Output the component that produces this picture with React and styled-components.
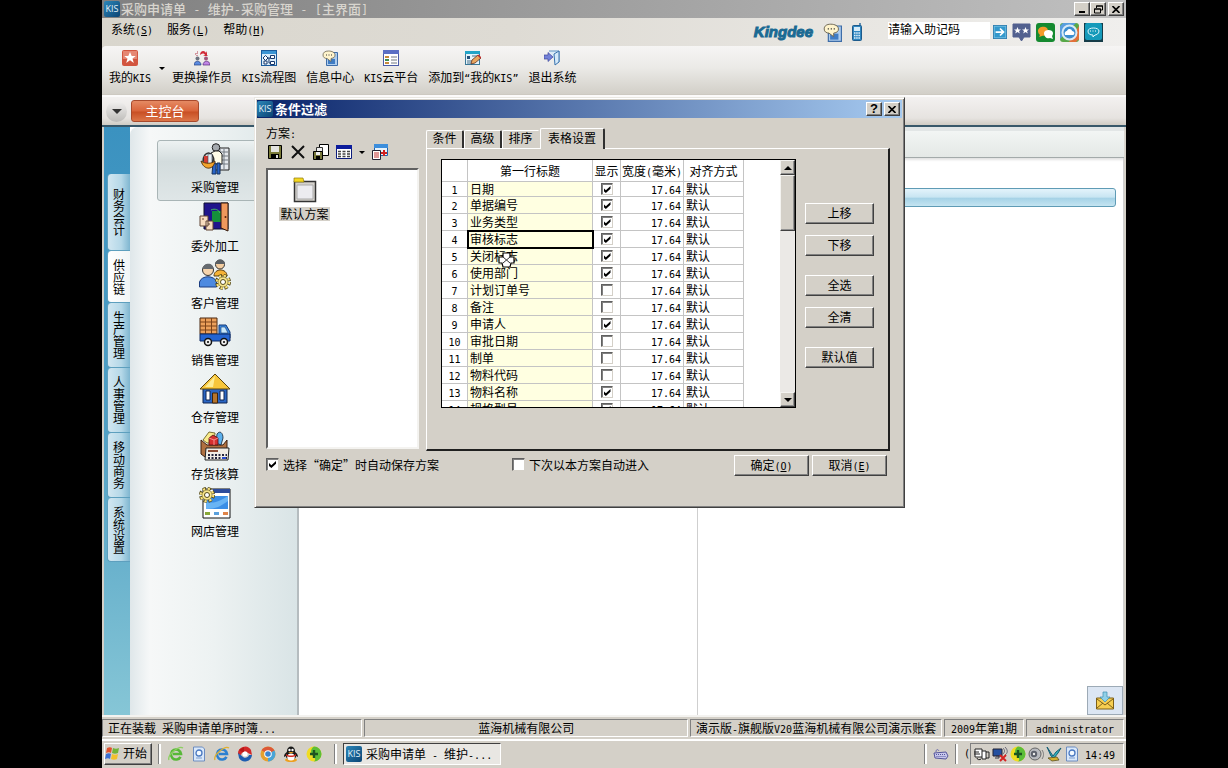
import React from 'react';
import styled, { createGlobalStyle } from 'styled-components';

const GlobalStyle = createGlobalStyle`
  * { box-sizing: border-box; }
  body {
    margin: 0;
    background: #000;
    color: #000;
    font: 12px/14px "Noto Sans CJK SC", sans-serif;
  }
  button, input { font: inherit; color: inherit; margin: 0; padding: 0; }
  button { border: 0; background: none; white-space: nowrap; }
  svg { display: block; flex: none; }
`;

/* half-width characters next to the 12px ideographs */
const Half = styled.span`
  font-family: "DejaVu Sans Mono", monospace;
  font-size: ${p => (p.$large ? '12px' : '10px')};
  line-height: 1;
  white-space: pre;
`;

const Screen = styled.div`
  min-height: 100vh;
  padding: 0 102px;
  background: #000;
`;

const Desktop = styled.div`
  position: relative;
  display: flex;
  flex-direction: column;
  min-height: 100vh;
  background: #d4d0c8;
`;

const TitleBar = styled.header`
  display: flex;
  align-items: center;
  gap: 1px;
  height: 18px;
  padding: 0 2px;
  color: #d8d5ce;
  font-size: 13px;
  background: linear-gradient(90deg, #808080, #c0c0c0);
`;

const TitleText = styled.h1`
  flex: 1;
  margin: 0;
  font-size: 13px;
  line-height: 16px;
  font-weight: 500;
  white-space: nowrap;
`;

const KisLogo = styled.span`
  display: inline-flex;
  align-items: center;
  justify-content: center;
  flex: none;
  width: 16px;
  height: 16px;
  border-radius: 2px;
  color: #e4f2fa;
  font: 9px/16px "Open Sans", sans-serif;
  background: linear-gradient(135deg, #2b86b8, #0b4474);
`;

const CaptionButtons = styled.div`
  display: flex;
  button:last-child { margin-left: 2px; }
`;

const CaptionButton = styled.button`
  display: flex;
  align-items: center;
  justify-content: center;
  width: 16px;
  height: 14px;
  color: #000;
  background: #d4d0c8;
  border: 1px solid;
  border-color: #fff #404040 #404040 #fff;
  box-shadow: inset -1px -1px #808080;
  font: bold 13px/12px "Liberation Sans", sans-serif;
`;

const MenuBar = styled.nav`
  display: flex;
  align-items: center;
  height: 28px;
  padding: 0 23px 0 9px;
  background: linear-gradient(90deg, #d9d6cd, #dedbd4 40%, #f0efed);
`;

const Menus = styled.div`
  display: flex;
  flex: 1;
  gap: 14px;
  padding-bottom: 6px;
`;

const Brand = styled.strong`
  margin-right: 10px;
  color: #1b6a93;
  font: italic 900 15px/18px "Liberation Sans", sans-serif;
  -webkit-text-stroke: 1px #1b6a93;
`;

const Mnemonic = styled.input`
  width: 102px;
  height: 17px;
  margin: 0 3px 3px 26px;
  padding-bottom: 4px;
  border: 0;
  background: #fff;
  outline: 0;
`;

const LinkIcons = styled.div`
  display: flex;
  align-items: center;
  gap: ${p => (p.$wide ? '10px' : '5px')};
`;

const IconButton = styled.button`
  display: flex;
  align-items: center;
`;

const ToolBar = styled.div`
  display: flex;
  gap: 10px;
  height: 49px;
  padding: 4px 7px 0;
  border-top-left-radius: 4px;
  background: linear-gradient(#f6f5f4, #ebeae7 45%, #d2cfc8);
  border-bottom: 1px solid #cdc9c1;
`;

const Tool = styled.button`
  display: flex;
  flex-direction: column;
  align-items: center;
  gap: 4px;
`;

const ToolArrow = styled.button`
  width: 1px;
  display: flex;
  justify-content: center;
  padding-top: 17px;
`;

const Triangle = styled.span`
  display: block;
  flex: none;
  width: 0;
  height: 0;
  border: ${p => p.$size}px solid transparent;
  border-bottom-width: 0;
  border-top-color: ${p => p.$color || '#000'};
  transform: ${p => (p.$up ? 'rotate(180deg)' : 'none')};
`;

const PageStrip = styled.div`
  display: flex;
  align-items: flex-end;
  gap: 4px;
  height: 32px;
  padding: 0 4px 3px;
  border-top: 2px solid #fbfafa;
  border-bottom: 2px solid #38586a;
  background: linear-gradient(#f3f1f0, #e6e3e0 75%, #d0ccc4);
`;

const RoundButton = styled.button`
  display: flex;
  align-items: center;
  justify-content: center;
  width: 21px;
  height: 21px;
  border-radius: 50%;
  background: linear-gradient(#f2f1f0, #bdbbb8);
`;

const PageTab = styled.button`
  width: 68px;
  height: 22px;
  border: 1px solid #a84a2c;
  border-radius: 3px;
  color: #fff;
  font-size: 13px;
  line-height: 20px;
  background: linear-gradient(#e58a63, #d9643a 50%, #c84f24 55%, #dc7548);
`;

const Main = styled.main`
  display: flex;
  flex: 1;
  margin: 0 2px;
  background: #fff;
`;

const Rail = styled.nav`
  width: 26px;
  padding: 47px 0 0 3px;
  background: linear-gradient(#3b92c0, #4f9fc4 50%, #86c6d6);
`;

const RailTab = styled.button`
  display: flex;
  align-items: center;
  justify-content: center;
  width: 23px;
  height: ${p => p.$height}px;
  border: 1px solid #5d9fbe;
  border-width: 0 0 1px 1px;
  border-radius: 4px 0 0 4px;
  line-height: 12px;
  background: ${p => (p.$active ? 'linear-gradient(90deg, #fff, #f1f5f6)' : 'linear-gradient(90deg, #d2e7f1, #b5d8e8 60%, #7fb6d0)')};
  span { width: 12px; white-space: normal; }
`;

const SidePanel = styled.aside`
  width: 169px;
  padding: 13px 0 0 27px;
  border-right: 2px solid #b5bcbf;
  border-top-left-radius: 8px;
  background: linear-gradient(90deg, #dfe7ea, #f6f8f8 12%, #edf2f2 50%, #d9e4e6);
`;

const SideItem = styled.button`
  display: flex;
  flex-direction: column;
  align-items: center;
  gap: 5px;
  width: 116px;
  height: ${p => (p.$active ? '61px' : '57px')};
  padding-top: ${p => (p.$active ? '2px' : '0')};
  border: 1px solid ${p => (p.$active ? '#a9b5b6' : 'transparent')};
  border-radius: 3px;
  background: ${p => (p.$active ? 'linear-gradient(#edf2f2, #d3dcdd 35%, #dfe6e7)' : 'none')};
`;

const Workspace = styled.div`
  display: flex;
  flex-direction: column;
  flex: 1;
`;

const WorkHeader = styled.div`
  height: 31px;
  border-top: 4px solid #e2e6e6;
  border-bottom: 1px solid #a3aaaa;
  background: linear-gradient(#f2f5f4, #e4e8e6);
  box-shadow: 0 2px 2px #e3e3e3;
`;

const Panes = styled.div`
  display: flex;
  flex: 1;
`;

const Pane = styled.section`
  display: flex;
  flex-direction: column;
  justify-content: space-between;
  align-items: flex-end;
  width: ${p => p.$width || 'auto'};
  flex: ${p => (p.$width ? 'none' : '1')};
  border-right: 1px solid #cfcfcf;
`;

const PaneHeading = styled.div`
  width: calc(100% - 16px);
  height: 19px;
  margin: 30px 7px 0 0;
  border: 1px solid #5f9bb5;
  border-radius: 3px;
  background: linear-gradient(#e3f3fb, #c8e5f2 48%, #a5d2e6 54%, #c4e4f1);
`;

const MailButton = styled.button`
  display: flex;
  align-items: center;
  justify-content: center;
  width: 36px;
  height: 29px;
  border: 1px solid #9daab6;
  background: #dce6f3;
`;

const StatusBar = styled.footer`
  display: flex;
  gap: 2px;
  height: 24px;
  padding: 2px 2px 2px 0;
  border-top: 2px solid #f4f3f0;
`;

const StatusCell = styled.div`
  flex: ${p => p.$flex || 'none'};
  width: ${p => p.$width || 'auto'};
  overflow: hidden;
  padding: 0 5px;
  text-align: ${p => p.$align || 'center'};
  line-height: 16px;
  white-space: nowrap;
  border: 1px solid;
  border-color: #808080 #fff #fff #808080;
`;

const TaskBar = styled.footer`
  display: flex;
  align-items: center;
  height: 29px;
  padding: 1px 2px 3px;
  border-top: 2px solid #fff;
`;

const StartButton = styled.button`
  display: flex;
  align-items: center;
  gap: 2px;
  width: 48px;
  height: 22px;
  padding-bottom: 2px;
  border: 1px solid;
  border-color: #fff #404040 #404040 #fff;
  box-shadow: inset -1px -1px #808080;
  line-height: 16px;
`;

const Grip = styled.span`
  width: 3px;
  height: 20px;
  margin: 0 6px;
  border-left: 1px solid #808080;
  border-right: 2px solid #fff;
`;

const QuickLaunch = styled.div`
  display: flex;
  gap: 7px;
  margin: 0 6px 0 0;
  padding-left: 1px;
`;

const TaskButton = styled.button`
  display: flex;
  align-items: center;
  gap: 4px;
  width: 158px;
  height: 22px;
  padding-left: 2px;
  border: 1px solid;
  border-color: #404040 #fff #fff #404040;
  background: #e9e7e3;
`;

const Spacer = styled.div`
  flex: 1;
`;

const Tray = styled.div`
  display: flex;
  align-items: center;
  gap: 2px;
  width: 154px;
  height: 22px;
  padding-left: 3px;
  border: 1px solid;
  border-color: #808080 #fff #fff #808080;
  time { margin-left: 3px; }
`;

const Dialog = styled.section`
  position: absolute;
  left: 152px;
  top: 97px;
  width: 651px;
  padding: 2px 2px 31px;
  background: #d4d0c8;
  border: 1px solid;
  border-color: #e9e7e2 #404040 #404040 #e9e7e2;
  box-shadow: inset 1px 1px #fff, inset -1px -1px #808080;
`;

const DialogTitle = styled.header`
  display: flex;
  align-items: center;
  gap: 2px;
  height: 18px;
  padding-right: 2px;
  color: #fff;
  background: linear-gradient(90deg, #0a246a, #a6caf0);
  h2 { flex: 1; margin: 0; font-size: 13px; line-height: 16px; }
`;

const DialogBody = styled.div`
  display: grid;
  grid-template-columns: 153px 1fr;
  gap: 7px;
  padding: 8px 12px 0 9px;
`;

const Schemes = styled.div`
  display: flex;
  flex-direction: column;
  padding-bottom: 2px;
`;

const SchemeTools = styled.div`
  display: flex;
  align-items: center;
  gap: 7px;
  margin: 4px 0 8px 1px;
`;

const SchemeList = styled.div`
  flex: 1;
  border: 2px solid;
  border-color: #606060 #f4f3f0 #f4f3f0 #606060;
  background: #fff;
  padding-top: 7px;
`;

const Scheme = styled.button`
  display: flex;
  flex-direction: column;
  align-items: center;
  gap: 4px;
  width: 73px;
  span { background: #d4d0c8; padding: 0 1px; }
`;

const TabStrip = styled.div`
  display: flex;
  align-items: flex-end;
  height: 22px;
`;

const Tab = styled.button`
  position: relative;
  width: ${p => (p.$active ? '65px' : '38px')};
  height: ${p => (p.$active ? '21px' : '18px')};
  margin-bottom: ${p => (p.$active ? '-1px' : '0')};
  padding-bottom: 3px;
  background: #d4d0c8;
  border-top: 1px solid #fff;
  border-left: 1px solid #fff;
  border-right: 2px solid ${p => (p.$last ? '#d4d0c8' : '#303030')};
  border-radius: 2px 2px 0 0;
`;

const TabPanel = styled.div`
  display: flex;
  gap: 9px;
  padding: 10px 14px 41px;
  border: 1px solid #fff;
  border-right: 2px solid #202020;
  border-bottom: 2px solid #202020;
`;

const GridBox = styled.div`
  display: flex;
  align-items: flex-start;
  justify-content: space-between;
  width: 355px;
  height: 249px;
  overflow: hidden;
  border: 1px solid #000;
  background: #fff;
`;

const Table = styled.table`
  table-layout: fixed;
  width: 302px;
  border-collapse: separate;
  border-spacing: 0;
  th, td {
    height: 17px;
    padding: 0 2px;
    line-height: 14px;
    font-weight: normal;
    white-space: nowrap;
    text-align: left;
    border-right: 1px solid #c4c4c4;
    border-bottom: 1px solid #c4c4c4;
  }
  thead th { height: 22px; padding: 0; text-align: center; }
  tbody tr:first-child > * { height: 15px; }
  tbody th { text-align: center; padding: 0; }
`;

const NameCell = styled.td`
  background: #ffffe1;
  outline: ${p => (p.$selected ? '2px solid #000' : 'none')};
  outline-offset: -1px;
`;

const NumberCell = styled.td`
  && { text-align: right; }
`;

const Check = styled.input`
  appearance: none;
  display: block;
  flex: none;
  width: ${p => (p.$small ? '12px' : '13px')};
  height: ${p => (p.$small ? '12px' : '13px')};
  border: 1px solid;
  border-color: #606060 #d4d0c8 #d4d0c8 #606060;
  box-shadow: inset 1px 1px #808080;
  background: #fff;
  ${p => p.$small && 'margin: 0 auto;'}
  &:checked::after {
    content: '';
    display: block;
    width: 7px;
    height: 7px;
    margin: 2px;
    background: #000;
    clip-path: polygon(0 30%, 34% 60%, 100% 0, 100% 40%, 34% 100%, 0 70%);
  }
`;

const ScrollBar = styled.div`
  display: flex;
  flex-direction: column;
  align-self: stretch;
  justify-content: space-between;
  width: 15px;
  background: #ebe9e6;
`;

const ScrollButton = styled.button`
  display: flex;
  align-items: center;
  justify-content: center;
  height: ${p => (p.$thumb ? '56px' : '15px')};
  width: 15px;
  background: #d4d0c8;
  border: 1px solid;
  border-color: #f4f3f0 #404040 #404040 #f4f3f0;
  box-shadow: inset -1px -1px #909090;
`;

const SideButtons = styled.div`
  display: flex;
  flex-direction: column;
  padding-top: 44px;
  gap: 19px;
  div { display: grid; gap: 11px; }
`;

const PushButton = styled.button`
  width: ${p => p.$width || '69px'};
  height: 21px;
  padding-bottom: 2px;
  background: #d4d0c8;
  border: 1px solid;
  border-color: #fff #404040 #404040 #fff;
  box-shadow: inset -1px -1px #808080;
`;

const DialogFooter = styled.div`
  display: flex;
  align-items: center;
  gap: 3px;
  padding: 4px 15px 0 9px;
`;

const CheckLabel = styled.label`
  display: flex;
  align-items: center;
  gap: 4px;
  padding-bottom: 2px;
  flex: ${p => p.$flex};
  white-space: nowrap;
`;

const Pointer = styled.svg`
  position: absolute;
  left: 243px;
  top: 154px;
`;

const Svg = ({ size = 16, box = 16, children }) => (
  <svg width={size} height={size} viewBox={`0 0 ${box} ${box}`} aria-hidden="true">{children}</svg>
);

const StarIcon = () => (
  <Svg>
    <rect width="16" height="16" rx="2" fill="#d2553f" />
    <rect x="1" y="1" width="14" height="8" fill="#e58773" />
    <path d="M8 2l1.700 4h4.100l-3.300 2.600 1.300 4.300L8 10.300l-3.800 2.600 1.300-4.300L2.200 6h4.100z" fill="#fff" />
  </Svg>
);

const SwitchUserIcon = () => (
  <Svg>
    <path d="M3 6V2h2M13 6V4M1 4h2" stroke="#b43a4e" strokeDasharray="1 1" fill="none" />
    <path d="M6 5c0-5 5-5 6-2l1-2v5H9l2-1c-1-2-3-2-5 0z" fill="#d22a38" />
    <circle cx="3.500" cy="8.500" r="2" fill="#6d7480" /><circle cx="12" cy="8.500" r="2" fill="#a0547a" />
    <path d="M0 15c0-5 7-5 7 0z" fill="#5b8be0" stroke="#203c80" strokeWidth=".7" />
    <path d="M9 15c0-5 7-5 7 0z" fill="#c085e6" stroke="#542878" strokeWidth=".7" />
  </Svg>
);

const FlowIcon = () => (
  <Svg>
    <rect x=".5" y=".5" width="15" height="15" fill="#d9ecfa" stroke="#1b5c9d" />
    <path d="M1 1h14v3H1z" fill="#3b95d4" />
    <path d="M4.500 5.500L7 8l-2.500 2.500L2 8zM9.500 5.500h4v3h-4zM9.500 11.500h4v3h-4zM3 11h3v3H3zM7 8h2.500M8 8v5h1.500" fill="#fff" stroke="#14366b" />
  </Svg>
);

const ChatIcon = ({ size }) => (
  <Svg size={size}>
    <path d="M4.500 2.500h11v13h-11z" fill="#aecdee" stroke="#3e6da8" />
    <path d="M6 14h7V9H6z" fill="#3f7cc4" />
    <path d="M6.500 1C3 1 1 2.500 1 5s2 3.500 4 3.500L9 11.500l0-3c3-.5 4-1.500 4-3.500 0-2.500-3-4-6.500-4z" fill="#fff4cc" stroke="#6b6450" strokeWidth=".8" />
    <path d="M4 5h1M6.500 5h1M9 5h1" stroke="#333" />
  </Svg>
);

const CloudListIcon = () => (
  <Svg>
    <rect x=".5" y=".5" width="15" height="15" fill="#fff" stroke="#4a5ca8" />
    <path d="M0 0h16v4H0z" fill="#5b6fc4" />
    <path d="M2 6h4v2H2zM2 12h4v2H2z" fill="#c88a3c" /><path d="M2 9h4v2H2z" fill="#3c8c50" />
    <path d="M8 7h6M8 10h6M8 13h6" stroke="#707880" />
  </Svg>
);

const AddToIcon = () => (
  <Svg>
    <rect x=".5" y="1.500" width="14" height="13" fill="#e6f4fb" stroke="#3a7898" />
    <path d="M0 1h15v3H0z" fill="#22a4c8" />
    <path d="M2 6h3v3H2z" fill="#24507a" /><path d="M7 6h5M2 11h5M2 13h4" stroke="#4b7088" />
    <path d="M6 14l1-4 6-5 3 3-6 5z" fill="#eaa860" stroke="#603020" strokeWidth=".8" />
    <path d="M13 5l3 3" stroke="#c02828" strokeWidth="1.500" />
  </Svg>
);

const ExitIcon = () => (
  <Svg>
    <path d="M5 1h10v11h-3" fill="#dcecf8" stroke="#5c92c4" />
    <path d="M10 4l5-3v11l-4 3z" fill="#d5eafa" stroke="#3973ad" />
    <path d="M0 5h4V2.500L9 7l-5 4.500V9H0z" fill="#7382d8" stroke="#3c469c" strokeWidth=".7" />
  </Svg>
);

const PhoneIcon = () => (
  <svg width="10" height="18" viewBox="0 0 10 18" aria-hidden="true">
    <path d="M8 0v3" stroke="#2c6da0" strokeWidth="1.500" />
    <rect x=".5" y="2.500" width="9" height="15" rx="1" fill="#2f86c0" stroke="#1d5b8c" />
    <path d="M2 4h6v4H2z" fill="#d5ecfa" />
    <path d="M2 10h6M2 12.500h6M2 15h6" stroke="#e6f4fc" strokeWidth="1.500" strokeDasharray="1.500 .7" />
  </svg>
);

const GoIcon = () => (
  <Svg size={14}>
    <rect x=".5" y=".5" width="15" height="15" fill="#6fbce2" stroke="#2c7daf" />
    <rect x="2" y="2" width="12" height="12" fill="#3398cc" />
    <path d="M3 8h8M8 4l4 4-4 4" fill="none" stroke="#fff" strokeWidth="2" />
  </Svg>
);

const StarsBubbleIcon = () => (
  <Svg size={19} box={19}>
    <path d="M1 1h17v13h-6l-2.500 4L7 14H1z" fill="#52618f" stroke="#52618f" strokeLinejoin="round" />
    <path d="M5.500 4l1 2.500h2.500l-2 1.500.8 2.500-2.300-1.500-2.300 1.500.8-2.500-2-1.500h2.500zM13.500 4l1 2.500H17l-2 1.500.8 2.500-2.300-1.500-2.300 1.500.8-2.500-2-1.500h2.500z" fill="#fff" />
  </Svg>
);

const GreenChatIcon = () => (
  <Svg size={19} box={19}>
    <rect width="19" height="19" rx="3" fill="#158a30" />
    <path d="M2 8c0-5 10-6 10 0s-4 4-6 5l-3 1 1-2c-1-1-2-2-2-4z" fill="#f49b2a" />
    <path d="M8 10c0-4 9-4 9 0 0 2-1 3-1 3l1 3-3-1c-3 1-6-1-6-5z" fill="#fff" />
  </Svg>
);

const CloudIcon = () => (
  <Svg size={19} box={19}>
    <rect width="19" height="19" rx="3" fill="#58a848" />
    <path d="M3 0h13L0 16V3z" fill="#5a9ede" /><path d="M19 3v13l-3 3H9z" fill="#e2703a" />
    <circle cx="9.500" cy="9.500" r="7" fill="#3c8ed0" stroke="#d8eaf6" strokeWidth="2" />
    <path d="M5 12c-1-3 1-4 2-4 1-3 5-2 5 0 3 0 3 4 1 4z" fill="#fff" />
  </Svg>
);

const TealChatIcon = () => (
  <Svg size={19} box={19}>
    <path d="M0 0h19v19H0z" fill="#163c48" />
    <rect x="1" y="0" width="17" height="17" rx="2" fill="#169aba" />
    <path d="M4 8c0-4 11-4 11 0 0 3-3 4-4 4l-2 2v-2c-3 0-5-1-5-4z" fill="none" stroke="#e0f6fb" />
    <path d="M6 8h7" stroke="#fff" strokeDasharray="1 1.500" />
  </Svg>
);

const PurchaseIcon = () => (
  <Svg size={32} box={32}>
    <path d="M16 5h14v22H16z" fill="#e4e8ec" stroke="#222" />
    <path d="M17 9h12M17 13h12M17 17h12M17 21h12M21 6v20M25 6v20" stroke="#737b82" />
    <circle cx="17" cy="4.500" r="3.800" fill="#a4a9ae" stroke="#222" />
    <path d="M12 10l4-2h4l3 3v10h-9z" fill="#fffde8" stroke="#222" />
    <path d="M14 20h3v11h-4zM18 20h3v11h-3z" fill="#2864c8" stroke="#14305c" />
    <path d="M4 19c0-12 11-12 11 0" fill="none" stroke="#333" strokeWidth="1.500" />
    <path d="M5 13h4v8H5z" fill="#d43c34" /><path d="M9 11h4v10H9z" fill="#e8eef2" stroke="#345" strokeWidth=".6" />
    <path d="M2 18c4 3 11 3 14 0-1 9-11 10-14 0z" fill="#f3a52c" stroke="#5c3810" />
  </Svg>
);

const DoorIcon = () => (
  <Svg size={32} box={32}>
    <path d="M5 1h24v26H5z" fill="#20148c" stroke="#101030" />
    <path d="M13 9h9v11h-9z" fill="#15903c" /><path d="M12 8c4-2 8 0 9 3" stroke="#48c060" fill="none" />
    <path d="M22 1h7v28l-7-3z" fill="#f0985c" stroke="#30180c" /><circle cx="26.500" cy="15" r="1" fill="#5c2008" />
    <path d="M1 14h8v10H1zM7 19h7v9H7z" fill="#f9dcc0" stroke="#604434" />
    <path d="M3 17h2M9 22h2" stroke="#604434" />
  </Svg>
);

const Gear = ({ x, y }) => (
  <g>
    <circle cx={x} cy={y} r="6" fill="none" stroke="#554a18" strokeWidth="4" strokeDasharray="3 1.710" />
    <circle cx={x} cy={y} r="5.500" fill="none" stroke="#f9e27c" strokeWidth="3.500" strokeDasharray="2 2.320" />
    <circle cx={x} cy={y} r="5" fill="#f9e68c" stroke="#554a18" strokeWidth=".5" />
    <circle cx={x} cy={y} r="2.500" fill="#fff" stroke="#554a18" />
  </g>
);

const CustomersIcon = () => (
  <Svg size={32} box={32}>
    <circle cx="21" cy="5.500" r="4.500" fill="#f3cda0" stroke="#333" /><path d="M16 5c1-6 10-6 10 0z" fill="#5b6064" />
    <path d="M15 17c0-8 13-8 13 0z" fill="#f6b236" stroke="#5c4010" />
    <circle cx="9" cy="11" r="5.500" fill="#f6d4ac" stroke="#333" /><path d="M3.500 10c1-7 11-7 11 0z" fill="#666b70" />
    <path d="M.5 28V23c2-7 15-7 17 0v5z" fill="#4c8ae0" stroke="#1b3c80" />
    <Gear x={24} y={23} />
  </Svg>
);

const TruckIcon = () => (
  <Svg size={32} box={32}>
    <path d="M1 2h17v16H1z" fill="#eca05a" stroke="#4b2810" />
    <path d="M1 6h17M1 10h17M1 14h17M6.500 2v16M12.500 2v16" stroke="#7b4218" />
    <path d="M20 9h7l4 7v6H20z" fill="#3b8ae2" stroke="#123674" /><path d="M22 11h4l3 6h-7z" fill="#c8e8fa" stroke="#123674" strokeWidth=".6" />
    <path d="M1 18h30v7H1z" fill="#2464d0" stroke="#0c2860" />
    <circle cx="9" cy="26" r="3.500" fill="#eee" stroke="#111" strokeWidth="1.500" /><circle cx="25" cy="26" r="3.500" fill="#eee" stroke="#111" strokeWidth="1.500" />
    <circle cx="9" cy="26" r="1" /><circle cx="25" cy="26" r="1" />
  </Svg>
);

const WarehouseIcon = () => (
  <Svg size={32} box={32}>
    <path d="M4 15h24v15H4z" fill="#2a66c4" stroke="#0e2450" />
    <path d="M16 1l15 15H1z" fill="#f7c63a" stroke="#5b430a" /><path d="M16 3l-10 11h8z" fill="#fdec94" />
    <path d="M7 18h4v9H7zM21 18h4v9h-4z" fill="#fff" stroke="#0e2450" />
    <path d="M13.500 20h5v10h-5z" fill="#b5742c" stroke="#402408" />
  </Svg>
);

const AccountingIcon = () => (
  <Svg size={32} box={32}>
    <path d="M2 10l6 5h16l4-5v16l-22 1-4-3z" fill="#b07040" stroke="#3d2010" />
    <path d="M4 10l6-8 6 1-1 10H8z" fill="#f9eb8c" stroke="#5b5010" strokeWidth=".8" />
    <path d="M17 13l1-9c3-4 6-1 6 4l-2 7z" fill="#5cb0ec" stroke="#123" strokeWidth=".8" /><path d="M10 8l4-3 5 3v7h-9z" fill="#d63030" stroke="#501010" strokeWidth=".8" /><path d="M10 8l5 2 4-2M15 10v5" stroke="#f49090" fill="none" />
    <path d="M7 18h23l-1 12H6z" fill="#f1ece4" stroke="#222" />
    <path d="M9 20h10v2H9z" fill="#8c4c34" />
    <path d="M9 25h19M9 28h19" stroke="#24243c" strokeWidth="2" strokeDasharray="2 1.500" /><path d="M23 27h4v2h-4z" fill="#284cd0" />
  </Svg>
);

const ShopIcon = () => (
  <Svg size={32} box={32}>
    <path d="M4 2h27v29H4z" fill="#fff" stroke="#111" /><path d="M14 2h17v4H14z" fill="#2c4c9c" />
    <path d="M7 9h22v13H7z" fill="#3a8ee6" /><path d="M7 22V15c10 2 15-2 22-6v5c-7 5-12 8-22 8z" fill="#69b4f4" />
    <path d="M6 25h5v3H6z" fill="#88a838" /><path d="M15 25h5v3h-5z" fill="#5aa0dc" /><path d="M24 25h5v3h-5z" fill="#e08448" />
    <Gear x={8} y={8} />
  </Svg>
);

const SaveIcon = () => (
  <Svg>
    <path d="M1.500 1.500h13v13h-13z" fill="#7b7b38" stroke="#000" /><path d="M4 2h8v6H4z" fill="#e4e4e0" /><path d="M4 10h8v5H4z" fill="#000" /><path d="M9 11h2v3H9z" fill="#ddd" />
  </Svg>
);
const DeleteIcon = () => (
  <Svg><path d="M2 2l12 12M14 2L2 14" stroke="#111" strokeWidth="2" /></Svg>
);
const SaveAsIcon = () => (
  <Svg>
    <path d="M6.500 .5h9v11h-9z" fill="#fff" stroke="#000" /><path d="M3.500 3.500h6v4h-6z" fill="#eee" stroke="#333" />
    <path d="M.5 7.500h9v8h-9z" fill="#77773a" stroke="#000" /><path d="M3 8h4v3H3z" fill="#eee" /><path d="M3 12h4v3H3z" />
  </Svg>
);
const GridIcon = () => (
  <Svg>
    <path d="M.5 1.500h15v13H.5z" fill="#fff" stroke="#0c1c7c" /><path d="M0 1h16v4H0z" fill="#0c1c9c" />
    <path d="M2 7.500h12M2 10h12M2 12.500h12" stroke="#444" strokeWidth="1.500" strokeDasharray="3 1.500" />
  </Svg>
);
const ExportIcon = () => (
  <Svg>
    <path d="M2.500 .5h13v11h-13z" fill="#e8f3fb" stroke="#1e62ac" /><path d="M2 0h14v4H2z" fill="#3c8edc" />
    <path d="M.5 6.500h8v9h-8z" fill="#fff" stroke="#223" /><path d="M2 9h5M2 11h5M2 13h5" stroke="#c03030" />
    <path d="M12 6v6M9 9h6" stroke="#d02020" strokeWidth="2" />
  </Svg>
);

const FolderIcon = () => (
  <Svg size={26} box={26}>
    <path d="M2.500 4.500h21v20h-21z" fill="#d5d2cc" stroke="#333" strokeWidth="1.500" /><path d="M2 1h9l1 4H2z" fill="#f5d820" stroke="#8c7a10" strokeWidth=".7" />
    <path d="M5 8h16v14H5z" fill="#ececf0" stroke="#aaa" />
  </Svg>
);

const MailIcon = () => (
  <Svg size={20} box={20}>
    <path d="M1.500 7h17v11h-17z" fill="#f6cf52" stroke="#7e6018" /><path d="M2 8l8 6 8-6M2 17l6-5M18 17l-6-5" fill="none" stroke="#7e6018" />
    <path d="M8 1h4v5h3l-5 5-5-5h3z" fill="#8fd0e8" stroke="#3c8cb0" strokeWidth=".7" />
  </Svg>
);

const FlagIcon = () => (
  <Svg>
    <path d="M2 3c2-1 4-1 5 0L6 8C5 7 3 7 1 8z" fill="#e2502c" /><path d="M8 3c2 1 4 1 6 0l-1 5c-2 1-4 1-6 0z" fill="#72b438" />
    <path d="M1 9c2-1 4-1 5 0l-1 5c-1-1-3-1-5 0z" fill="#3b70d4" /><path d="M7 9c2 1 4 1 6 0l-1 5c-2 1-4 1-6 0z" fill="#f3c02c" />
  </Svg>
);

const EIcon = ({ color, ring }) => (
  <Svg>
    <path d="M12.500 10.800A5 5 0 1 1 13 8H5" fill="none" stroke={color} strokeWidth="2.600" />
    <path d="M1 14C-1 9 11-1 15 2" fill="none" stroke={ring} strokeWidth="1.300" />
  </Svg>
);
const PageIcon = () => (
  <Svg><path d="M2.500 1h9l2 2v12h-11z" fill="#d9e8fa" stroke="#6c8cc0" /><circle cx="8" cy="7" r="3" fill="#f4faff" stroke="#4a78c0" strokeWidth="1.300" /><path d="M5 12h6" stroke="#7c9ccc" /></Svg>
);
const RedBlueIcon = () => (
  <Svg><path d="M1 8a7 7 0 0 1 13-4l1 5-4-2a4 4 0 0 0-7 2z" fill="#d22828" /><path d="M15 9a7 7 0 0 1-13 3L1 7l4 3c2 3 6 2 7-1z" fill="#1e5db0" /><path d="M2 4l5-3v6z" fill="#b81818" /><circle cx="8" cy="8" r="2.500" fill="#fff" /></Svg>
);
const ChromeIcon = () => (
  <Svg><circle cx="8" cy="8" r="7.500" fill="#e5a030" /><path d="M8 8L1.500 4.300A7.500 7.500 0 0 1 14.500 4.500z" fill="#dc5838" /><path d="M8 8l6.500-3.500A7.500 7.500 0 0 1 8 15.500z" fill="#48a4d8" /><circle cx="8" cy="8" r="3.800" fill="#fff" /><circle cx="8" cy="8" r="2.800" fill="#3c84d0" /></Svg>
);
const PenguinIcon = () => (
  <Svg><ellipse cx="8" cy="14" rx="6" ry="2" fill="#eca020" /><path d="M1 11c0-4 3-4 3-6 0-6 8-6 8 0 0 2 3 2 3 6l-2-1c0 5-10 5-10 0z" fill="#181818" /><ellipse cx="8" cy="11" rx="3.800" ry="3.500" fill="#fff" /><circle cx="6.500" cy="4" r="1.200" fill="#fff" /><circle cx="9.500" cy="4" r="1.200" fill="#fff" /><path d="M5 6h6l-3 1.500z" fill="#f0a020" /><path d="M3 8c3 2 7 2 10 0v1.500c-3 2-7 2-10 0z" fill="#d82c20" /></Svg>
);
const PlusBallIcon = () => (
  <Svg><circle cx="8" cy="8" r="7.500" fill="#f0dc22" /><path d="M8 .5a7.500 7.500 0 0 1 0 15c4-4-3-5-3-10 0-2 1-4 3-5z" fill="#5cbe38" /><path d="M8 4v8M4 8h8" stroke="#1d5420" strokeWidth="2.400" /></Svg>
);
const KeyboardIcon = () => (
  <Svg><path d="M3 6C3 3 5 3 6 5" fill="none" stroke="#66a" /><path d="M1 7l12-1 2 4-2 3-11-1z" fill="#c8c8ec" stroke="#55559c" /><path d="M3 8.500h10M3.500 10.500h10" stroke="#55559c" strokeDasharray="1 1" /></Svg>
);
const PlugIcon = () => (
  <Svg><path d="M1 3h7v2h4v8H8v-2H1z" fill="#fff" stroke="#222" /><path d="M0 6h5M0 8h6M12 6h3v6h-3M8 5v6" stroke="#222" fill="none" /><path d="M3 12c0 2 3 2 4 1" stroke="#222" fill="none" /></Svg>
);
const NetworkOffIcon = () => (
  <Svg><path d="M1 3h9v7H1z" fill="#2450a0" stroke="#223" /><path d="M4 10h3v2H3" stroke="#334" fill="none" /><path d="M11 2c2 2 2 4 0 6M13 1c3 3 3 6 0 8" fill="none" stroke="#667" /><path d="M8 9l6 6M14 9l-6 6" stroke="#d42424" strokeWidth="2" /></Svg>
);
const SpeakerIcon = () => (
  <Svg><circle cx="7" cy="8" r="6" fill="#b8bac0" stroke="#666" /><circle cx="6" cy="8" r="3.200" fill="#5c606c" /><circle cx="6" cy="8" r="1.200" fill="#eee" /><path d="M14 4c2 3 2 6 0 9" fill="none" stroke="#777" /></Svg>
);
const BirdIcon = () => (
  <Svg><path d="M1 1l4 9 3 2 4-5 3-5-5 4-3 4z" fill="#34b8c0" stroke="#145c74" /><path d="M2 12l4 3 7-1-2-3z" fill="#d4b030" stroke="#4c4410" strokeWidth=".7" /></Svg>
);

const CloseGlyph = () => (
  <svg width="8" height="7" viewBox="0 0 8 7" aria-hidden="true"><path d="M.5 0l7 7M7.500 0l-7 7" stroke="#000" strokeWidth="1.600" /></svg>
);

const menus = [['系统', 'S'], ['服务', 'L'], ['帮助', 'H']];

const rail = [
  ['财务会计', 77], ['供应链', 52], ['生产管理', 65], ['人事管理', 65], ['移动商务', 65], ['系统设置', 64],
];

const modules = [
  ['采购管理', PurchaseIcon], ['委外加工', DoorIcon], ['客户管理', CustomersIcon], ['销售管理', TruckIcon],
  ['仓存管理', WarehouseIcon], ['存货核算', AccountingIcon], ['网店管理', ShopIcon],
];

const columns = [
  ['日期', true], ['单据编号', true], ['业务类型', true], ['审核标志', true], ['关闭标志', true],
  ['使用部门', true], ['计划订单号', false], ['备注', false], ['申请人', true], ['审批日期', false],
  ['制单', false], ['物料代码', false], ['物料名称', true], ['规格型号', true],
];

const ColumnTable = () => (
  <GridBox>
    <Table>
      <colgroup>
        <col width="26" /><col width="125" /><col width="28" /><col width="63" /><col width="60" />
      </colgroup>
      <thead>
        <tr>
          <th /><th scope="col">第一行标题</th><th scope="col">显示</th>
          <th scope="col">宽度<Half>(</Half>毫米<Half>)</Half></th><th scope="col">对齐方式</th>
        </tr>
      </thead>
      <tbody>
        {columns.map(([name, shown], i) => (
          <tr key={name}>
            <th scope="row"><Half>{i + 1}</Half></th>
            <NameCell $selected={i === 3}>{name}</NameCell>
            <td><Check $small type="checkbox" defaultChecked={shown} aria-label={name} /></td>
            <NumberCell><Half>17.64</Half></NumberCell>
            <td>默认</td>
          </tr>
        ))}
      </tbody>
    </Table>
    <ScrollBar>
      <div>
        <ScrollButton aria-label="向上"><Triangle $size={4} $up /></ScrollButton>
        <ScrollButton $thumb aria-label="滚动" />
      </div>
      <ScrollButton aria-label="向下"><Triangle $size={4} /></ScrollButton>
    </ScrollBar>
  </GridBox>
);

const FilterDialog = () => (
  <Dialog role="dialog" aria-label="条件过滤">
    <DialogTitle>
      <KisLogo>KIS</KisLogo>
      <h2>条件过滤</h2>
      <CaptionButtons>
        <CaptionButton aria-label="帮助">?</CaptionButton>
        <CaptionButton aria-label="关闭"><CloseGlyph /></CaptionButton>
      </CaptionButtons>
    </DialogTitle>
    <DialogBody>
      <Schemes>
        <div>方案<Half>:</Half></div>
        <SchemeTools>
          <IconButton aria-label="保存"><SaveIcon /></IconButton>
          <IconButton aria-label="删除"><DeleteIcon /></IconButton>
          <IconButton aria-label="另存"><SaveAsIcon /></IconButton>
          <IconButton aria-label="视图"><GridIcon /></IconButton>
          <Triangle $size={3} />
          <IconButton aria-label="引出"><ExportIcon /></IconButton>
        </SchemeTools>
        <SchemeList>
          <Scheme><FolderIcon /><span>默认方案</span></Scheme>
        </SchemeList>
      </Schemes>
      <div>
        <TabStrip role="tablist">
          <Tab role="tab">条件</Tab>
          <Tab role="tab">高级</Tab>
          <Tab role="tab" $last>排序</Tab>
          <Tab role="tab" $active>表格设置</Tab>
        </TabStrip>
        <TabPanel>
          <ColumnTable />
          <SideButtons>
            <div><PushButton>上移</PushButton><PushButton>下移</PushButton></div>
            <div><PushButton>全选</PushButton><PushButton>全清</PushButton></div>
            <PushButton>默认值</PushButton>
          </SideButtons>
        </TabPanel>
      </div>
    </DialogBody>
    <DialogFooter>
      <CheckLabel $flex="0 0 243px"><Check type="checkbox" defaultChecked />选择“确定”时自动保存方案</CheckLabel>
      <CheckLabel $flex="1"><Check type="checkbox" />下次以本方案自动进入</CheckLabel>
      <PushButton $width="75px">确定<Half>(<u>O</u>)</Half></PushButton>
      <PushButton $width="75px">取消<Half>(<u>E</u>)</Half></PushButton>
    </DialogFooter>
    <Pointer width="17" height="16" viewBox="0 0 17 16" aria-hidden="true">
      <path d="M5 1h7v4h4v6h-3l-1 4H5l-1-4H1V5h4z" fill="#fff" stroke="#000" strokeWidth="1.200" />
      <path d="M5 5l7 6M12 5l-7 6" stroke="#333" />
    </Pointer>
  </Dialog>
);

const App = () => (
  <Screen>
    <GlobalStyle />
    <Desktop>
      <TitleBar>
        <KisLogo>KIS</KisLogo>
        <TitleText>采购申请单<Half $large> - </Half>维护<Half $large>-</Half>采购管理<Half $large> - [</Half>主界面<Half $large>]</Half></TitleText>
        <CaptionButtons>
          <CaptionButton aria-label="最小化"><svg width="8" height="7" viewBox="0 0 8 7"><path d="M1 5h6v2H1z" /></svg></CaptionButton>
          <CaptionButton aria-label="还原"><svg width="9" height="9" viewBox="0 0 9 9"><path d="M2.500 3V1h6v4h-2M2 1h7M.5 4v4h6V4zM0 4h7" fill="none" stroke="#000" /></svg></CaptionButton>
          <CaptionButton aria-label="关闭"><CloseGlyph /></CaptionButton>
        </CaptionButtons>
      </TitleBar>
      <MenuBar>
        <Menus>
          {menus.map(([name, key]) => (
            <button key={key}>{name}<Half>(<u>{key}</u>)</Half></button>
          ))}
        </Menus>
        <Brand>Kingdee</Brand>
        <LinkIcons $wide>
          <IconButton aria-label="消息"><ChatIcon size={19} /></IconButton>
          <IconButton aria-label="手机"><PhoneIcon /></IconButton>
        </LinkIcons>
        <Mnemonic defaultValue="请输入助记码" aria-label="助记码" />
        <LinkIcons>
          <IconButton aria-label="转到"><GoIcon /></IconButton>
          <IconButton aria-label="论坛"><StarsBubbleIcon /></IconButton>
          <IconButton aria-label="微信"><GreenChatIcon /></IconButton>
          <IconButton aria-label="云"><CloudIcon /></IconButton>
          <IconButton aria-label="客服"><TealChatIcon /></IconButton>
        </LinkIcons>
      </MenuBar>
      <ToolBar>
        <Tool><StarIcon /><span>我的<Half>KIS</Half></span></Tool>
        <ToolArrow aria-label="更多"><Triangle $size={3} /></ToolArrow>
        <Tool><SwitchUserIcon />更换操作员</Tool>
        <Tool><FlowIcon /><span><Half>KIS</Half>流程图</span></Tool>
        <Tool><ChatIcon size={16} />信息中心</Tool>
        <Tool><CloudListIcon /><span><Half>KIS</Half>云平台</span></Tool>
        <Tool><AddToIcon /><span>添加到<Half>“</Half>我的<Half>KIS”</Half></span></Tool>
        <Tool><ExitIcon />退出系统</Tool>
      </ToolBar>
      <PageStrip>
        <RoundButton aria-label="页面列表"><Triangle $size={5} $color="#333" /></RoundButton>
        <PageTab>主控台</PageTab>
      </PageStrip>
      <Main>
        <Rail>
          {rail.map(([name, height], i) => (
            <RailTab key={name} $height={height} $active={i === 1}><span>{name}</span></RailTab>
          ))}
        </Rail>
        <SidePanel>
          {modules.map(([name, Icon], i) => (
            <SideItem key={name} $active={i === 0}><Icon />{name}</SideItem>
          ))}
        </SidePanel>
        <Workspace>
          <WorkHeader />
          <Panes>
            <Pane $width="399px" />
            <Pane>
              <PaneHeading />
              <MailButton aria-label="邮件"><MailIcon /></MailButton>
            </Pane>
          </Panes>
        </Workspace>
      </Main>
      <StatusBar>
        <StatusCell $flex="260" $align="left">正在装载<Half> </Half>采购申请单序时簿<Half>...</Half></StatusCell>
        <StatusCell $flex="326">蓝海机械有限公司</StatusCell>
        <StatusCell $width="252px">演示版<Half>-</Half>旗舰版<Half>V20</Half>蓝海机械有限公司演示账套</StatusCell>
        <StatusCell $width="80px"><Half>2009</Half>年第<Half>1</Half>期</StatusCell>
        <StatusCell $width="98px"><Half>administrator</Half></StatusCell>
      </StatusBar>
      <TaskBar>
        <StartButton><FlagIcon />开始</StartButton>
        <Grip />
        <QuickLaunch>
          <IconButton aria-label="浏览器"><EIcon color="#58b838" ring="#8cd060" /></IconButton>
          <IconButton aria-label="文档"><PageIcon /></IconButton>
          <IconButton aria-label="IE"><EIcon color="#2c80d0" ring="#e0b030" /></IconButton>
          <IconButton aria-label="同步"><RedBlueIcon /></IconButton>
          <IconButton aria-label="Chrome"><ChromeIcon /></IconButton>
          <IconButton aria-label="QQ"><PenguinIcon /></IconButton>
          <IconButton aria-label="安全"><PlusBallIcon /></IconButton>
        </QuickLaunch>
        <Grip />
        <TaskButton><KisLogo>KIS</KisLogo><span>采购申请单<Half> - </Half>维护<Half>-...</Half></span></TaskButton>
        <Spacer />
        <Grip />
        <KeyboardIcon />
        <Grip />
        <Half>(</Half>
        <Tray>
          <PlugIcon /><NetworkOffIcon /><PlusBallIcon /><SpeakerIcon /><BirdIcon /><PageIcon />
          <time><Half>14:49</Half></time>
        </Tray>
      </TaskBar>
      <FilterDialog />
    </Desktop>
  </Screen>
);

export default App;
